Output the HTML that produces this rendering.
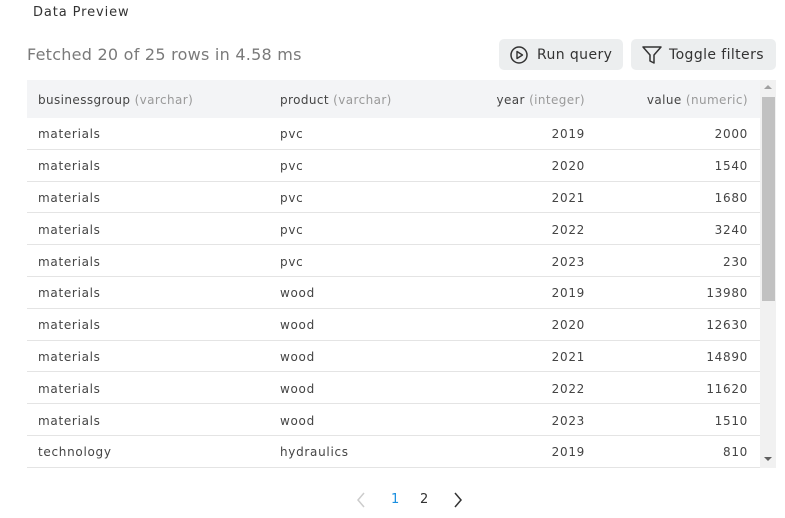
<!DOCTYPE html>
<html><head><style>
body{margin:0;width:785px;height:518px;background:#fff;font-family:"DejaVu Sans",sans-serif;color:#333;position:relative;overflow:hidden}
.t{position:absolute;left:33px;top:5px;font-size:13px;color:#333;letter-spacing:.9px}
.f{position:absolute;left:27px;top:45px;font-size:16px;color:#7a7a7a;letter-spacing:.25px}
.b{position:absolute;top:39px;height:31px;background:#eceeef;border-radius:5px;font-size:14px;color:#333;display:flex;align-items:center;box-sizing:border-box;padding-left:10px;letter-spacing:.4px}
.tbl{position:absolute;left:27px;top:80px;width:733px}
.r{height:31.8px;display:flex;align-items:center;border-bottom:1px solid #e4e4e4;box-sizing:border-box;font-size:12px;position:relative;color:#444;letter-spacing:.7px;padding-top:2px}
.h{height:38px;background:#f3f4f6;border:none;letter-spacing:.4px}
.c1{position:absolute;left:11px}.c2{position:absolute;left:253px}
.c3{position:absolute;right:175px}.c4{position:absolute;right:12px}
.g{color:#999}
.sb{position:absolute;left:760px;top:80px;width:16px;height:388px;background:#f1f1f1}
.th{position:absolute;left:762px;top:97px;width:13px;height:204px;background:#c1c1c1}
.p{position:absolute;top:492px;font-size:13px}
</style></head><body>
<div class="t">Data Preview</div>
<div class="f">Fetched 20 of 25 rows in 4.58 ms</div>
<div class="b" style="left:499px;width:124px"><svg width="20" height="20" viewBox="0 0 20 20" style="margin-right:8px"><circle cx="10" cy="10" r="8" fill="none" stroke="#333" stroke-width="1.5"/><path d="M8 6.5v7l5.5-3.5z" fill="none" stroke="#333" stroke-width="1.4" stroke-linejoin="round"/></svg>Run query</div>
<div class="b" style="left:631px;width:145px"><svg width="22" height="22" viewBox="0 0 22 22" style="margin-right:6px"><path d="M2 3h18l-7 8v8l-4-2v-6z" fill="none" stroke="#333" stroke-width="1.5" stroke-linejoin="round"/></svg>Toggle filters</div>
<div class="tbl">
<div class="r h"><span class="c1">businessgroup <span class="g">(varchar)</span></span><span class="c2">product <span class="g">(varchar)</span></span><span class="c3">year <span class="g">(integer)</span></span><span class="c4">value <span class="g">(numeric)</span></span></div>
<div class="r"><span class="c1">materials</span><span class="c2">pvc</span><span class="c3">2019</span><span class="c4">2000</span></div>
<div class="r"><span class="c1">materials</span><span class="c2">pvc</span><span class="c3">2020</span><span class="c4">1540</span></div>
<div class="r"><span class="c1">materials</span><span class="c2">pvc</span><span class="c3">2021</span><span class="c4">1680</span></div>
<div class="r"><span class="c1">materials</span><span class="c2">pvc</span><span class="c3">2022</span><span class="c4">3240</span></div>
<div class="r"><span class="c1">materials</span><span class="c2">pvc</span><span class="c3">2023</span><span class="c4">230</span></div>
<div class="r"><span class="c1">materials</span><span class="c2">wood</span><span class="c3">2019</span><span class="c4">13980</span></div>
<div class="r"><span class="c1">materials</span><span class="c2">wood</span><span class="c3">2020</span><span class="c4">12630</span></div>
<div class="r"><span class="c1">materials</span><span class="c2">wood</span><span class="c3">2021</span><span class="c4">14890</span></div>
<div class="r"><span class="c1">materials</span><span class="c2">wood</span><span class="c3">2022</span><span class="c4">11620</span></div>
<div class="r"><span class="c1">materials</span><span class="c2">wood</span><span class="c3">2023</span><span class="c4">1510</span></div>
<div class="r"><span class="c1">technology</span><span class="c2">hydraulics</span><span class="c3">2019</span><span class="c4">810</span></div>
</div>
<div class="sb"></div><div class="th"></div>
<svg style="position:absolute;left:763px;top:84px" width="10" height="6"><path d="M1 5h8L5 1z" fill="#a0a0a0"/></svg>
<svg style="position:absolute;left:763px;top:456px" width="10" height="6"><path d="M1 1h8L5 5z" fill="#606060"/></svg>
<svg style="position:absolute;left:355px;top:492px" width="12" height="16"><path d="M9 1L3 8l6 7" fill="none" stroke="#ccc" stroke-width="1.5"/></svg>
<span class="p" style="left:391px;color:#1a8fe0">1</span>
<span class="p" style="left:420px;color:#333">2</span>
<svg style="position:absolute;left:452px;top:492px" width="12" height="16"><path d="M3 1l6 7-6 7" fill="none" stroke="#333" stroke-width="1.5"/></svg>
</body></html>
